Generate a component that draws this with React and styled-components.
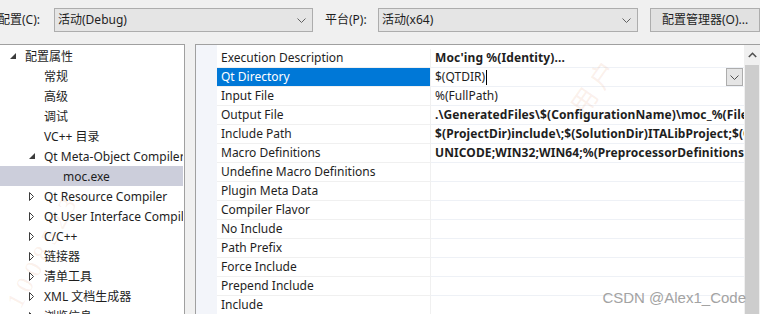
import React from 'react';
import styled, { createGlobalStyle } from 'styled-components';

const GlobalStyle = createGlobalStyle`
  html, body {
    margin: 0;
    padding: 0;
    background: #f0f0f0;
    overflow: hidden;
  }
  body {
    font-family: "Noto Sans", "Noto Sans CJK SC", sans-serif;
    font-size: 12px;
    color: #1e1e1e;
  }
`;

const Dialog = styled.div`
  position: relative;
  width: 760px;
  height: 314px;
  overflow: hidden;
  background: #f0f0f0;
  display: flex;
  flex-direction: column;
`;

const TopBar = styled.div`
  height: 44px;
  display: flex;
  align-items: flex-start;
  padding-top: 8px;
  box-sizing: border-box;
`;

const FieldLabel = styled.div`
  width: ${(p) => p.$width}px;
  height: 24px;
  line-height: 24px;
  padding-left: ${(p) => p.$pad || 0}px;
  margin-left: ${(p) => p.$shift || 0}px;
  box-sizing: border-box;
  white-space: nowrap;
  flex-shrink: 0;
`;

const Combo = styled.div`
  width: ${(p) => p.$width}px;
  height: 24px;
  box-sizing: border-box;
  border: 1px solid #adadad;
  background: #e5e5e5;
  display: flex;
  align-items: center;
  justify-content: space-between;
  padding: 0 6px 0 3px;
  flex-shrink: 0;
`;

const ComboText = styled.span`
  line-height: 22px;
`;

const Button = styled.div`
  margin-left: 12px;
  width: 110px;
  height: 24px;
  box-sizing: border-box;
  border: 1px solid #adadad;
  background: #e1e1e1;
  line-height: 22px;
  padding-left: 11px;
  white-space: nowrap;
  flex-shrink: 0;
`;

const Body = styled.div`
  flex: 1;
  display: flex;
  gap: 10px;
  min-height: 0;
`;

const TreePanel = styled.div`
  margin-left: -1px;
  width: 186px;
  box-sizing: border-box;
  border: 1px solid #a0a0a0;
  border-bottom: none;
  background: #ffffff;
  padding-top: 1px;
  overflow: hidden;
  flex-shrink: 0;
`;

const TreeRow = styled.div`
  height: 20px;
  display: flex;
  align-items: center;
  padding-left: ${(p) => 10 + p.$level * 19}px;
  background: ${(p) => (p.$selected ? '#cccedb' : 'transparent')};
  white-space: nowrap;
  margin-right: 1px;
  overflow: hidden;
`;

const Expander = styled.span`
  width: 15px;
  height: 20px;
  display: flex;
  align-items: center;
  flex-shrink: 0;
`;

const GridPanel = styled.div`
  width: 565px;
  box-sizing: border-box;
  border: 1px solid #a0a0a0;
  border-bottom: none;
  border-right: none;
  background: #ffffff;
  display: flex;
  overflow: hidden;
  flex-shrink: 0;
`;

const Gutter = styled.div`
  width: 21px;
  background: #f3f5fa;
  flex-shrink: 0;
`;

const Rows = styled.div`
  flex: 1;
  padding-top: 4px;
  min-width: 0;
`;

const PropRow = styled.div`
  height: 19px;
  display: grid;
  grid-template-columns: 214px 1fr;
`;

const NameCell = styled.div`
  box-sizing: border-box;
  padding-left: 4px;
  line-height: 18px;
  border-bottom: 1px solid #f0f0f0;
  border-right: 1px solid #f0f0f0;
  background: ${(p) => (p.$selected ? '#0078d7' : '#ffffff')};
  color: ${(p) => (p.$selected ? '#ffffff' : '#1e1e1e')};
  white-space: nowrap;
  overflow: hidden;
`;

const ValueCell = styled.div`
  box-sizing: border-box;
  padding-left: 4px;
  line-height: 18px;
  border-bottom: 1px solid #eef1f6;
  font-weight: ${(p) => (p.$bold ? 700 : 400)};
  white-space: nowrap;
  overflow: hidden;
  display: flex;
  align-items: center;
  justify-content: space-between;
  padding-right: 1px;
`;

const ValueText = styled.span`
  letter-spacing: ${(p) => (p.$bold ? '0.1px' : '0')};
`;

const Caret = styled.span`
  display: inline-block;
  width: 1px;
  height: 15px;
  background: #000;
  vertical-align: middle;
  margin-left: 1px;
`;

const DropButton = styled.div`
  width: 17px;
  height: 18px;
  box-sizing: border-box;
  border: 1px solid #adadad;
  background: #e5e5e5;
  display: flex;
  align-items: center;
  justify-content: center;
  flex-shrink: 0;
`;

const Scrollbar = styled.div`
  width: 16px;
  background: #f0f0f0;
  display: flex;
  flex-direction: column;
  flex-shrink: 0;
`;

const ScrollArrow = styled.div`
  height: 20px;
  display: flex;
  align-items: center;
  justify-content: center;
`;

const ScrollThumb = styled.div`
  flex: 1;
  margin: 0 1px;
  background: #cdcdcd;
`;

const Watermark = styled.div`
  position: absolute;
  left: ${(p) => p.$x}px;
  top: ${(p) => p.$y}px;
  transform: rotate(${(p) => p.$rot}deg);
  transform-origin: left top;
  font-family: "Liberation Serif", "Noto Sans CJK SC", serif;
  font-size: ${(p) => p.$size}px;
  letter-spacing: 6px;
  color: rgba(225, 150, 110, 0.14);
  white-space: nowrap;
  pointer-events: none;
`;

const Credit = styled.div`
  position: absolute;
  right: 14px;
  bottom: 8px;
  font-family: "Liberation Sans", Arial, sans-serif;
  font-size: 15px;
  color: #a3a3a3;
  white-space: nowrap;
`;

const Chevron = ({ color = '#606060' }) => (
  <svg width="9" height="5" viewBox="0 0 9 5">
    <path d="M0.5 0.5 L4.5 4.5 L8.5 0.5" fill="none" stroke={color} strokeWidth="1" />
  </svg>
);

const OpenArrow = () => (
  <svg width="6" height="6" viewBox="0 0 6 6">
    <path d="M6 0 L6 6 L0 6 Z" fill="#3c3c3c" />
  </svg>
);

const ClosedArrow = () => (
  <svg width="5" height="9" viewBox="0 0 5 9">
    <path d="M0.5 0.5 L4.5 4.5 L0.5 8.5 Z" fill="none" stroke="#3c3c3c" strokeWidth="1" />
  </svg>
);

const treeItems = [
  { label: '配置属性', level: 0, state: 'open' },
  { label: '常规', level: 1 },
  { label: '高级', level: 1 },
  { label: '调试', level: 1 },
  { label: 'VC++ 目录', level: 1 },
  { label: 'Qt Meta-Object Compiler', level: 1, state: 'open' },
  { label: 'moc.exe', level: 2, selected: true },
  { label: 'Qt Resource Compiler', level: 1, state: 'closed' },
  { label: 'Qt User Interface Compiler', level: 1, state: 'closed' },
  { label: 'C/C++', level: 1, state: 'closed' },
  { label: '链接器', level: 1, state: 'closed' },
  { label: '清单工具', level: 1, state: 'closed' },
  { label: 'XML 文档生成器', level: 1, state: 'closed' },
  { label: '浏览信息', level: 1, state: 'closed' },
];

const props = [
  { name: 'Execution Description', value: "Moc'ing %(Identity)...", bold: true },
  { name: 'Qt Directory', value: '$(QTDIR)', selected: true },
  { name: 'Input File', value: '%(FullPath)' },
  { name: 'Output File', value: '.\\GeneratedFiles\\$(ConfigurationName)\\moc_%(Filename).cpp', bold: true },
  { name: 'Include Path', value: '$(ProjectDir)include\\;$(SolutionDir)ITALibProject;$(QTDIR)\\include', bold: true },
  { name: 'Macro Definitions', value: 'UNICODE;WIN32;WIN64;%(PreprocessorDefinitions)', bold: true },
  { name: 'Undefine Macro Definitions', value: '' },
  { name: 'Plugin Meta Data', value: '' },
  { name: 'Compiler Flavor', value: '' },
  { name: 'No Include', value: '' },
  { name: 'Path Prefix', value: '' },
  { name: 'Force Include', value: '' },
  { name: 'Prepend Include', value: '' },
  { name: 'Include', value: '' },
];

export default function App() {
  return (
    <Dialog>
      <GlobalStyle />
      <TopBar>
        <FieldLabel $width={56} $shift={-2}>配置(C):</FieldLabel>
        <Combo $width={259}>
          <ComboText>活动(Debug)</ComboText>
          <Chevron />
        </Combo>
        <FieldLabel $width={65} $pad={12}>平台(P):</FieldLabel>
        <Combo $width={260}>
          <ComboText>活动(x64)</ComboText>
          <Chevron />
        </Combo>
        <Button>配置管理器(O)...</Button>
      </TopBar>
      <Body>
        <TreePanel>
          {treeItems.map((item) => (
            <TreeRow key={item.label} $level={item.level} $selected={item.selected}>
              <Expander>
                {item.state === 'open' && <OpenArrow />}
                {item.state === 'closed' && <ClosedArrow />}
              </Expander>
              {item.label}
            </TreeRow>
          ))}
        </TreePanel>
        <GridPanel>
          <Gutter />
          <Rows>
            {props.map((p) => (
              <PropRow key={p.name}>
                <NameCell $selected={p.selected}>{p.name}</NameCell>
                <ValueCell $bold={p.bold}>
                  <ValueText $bold={p.bold}>
                    {p.value}
                    {p.selected && <Caret />}
                  </ValueText>
                  {p.selected && (
                    <DropButton>
                      <Chevron color="#505050" />
                    </DropButton>
                  )}
                </ValueCell>
              </PropRow>
            ))}
          </Rows>
          <Scrollbar>
            <ScrollArrow>
              <svg width="9" height="6" viewBox="0 0 9 6">
                <path d="M0.8 5 L4.5 1.3 L8.2 5" fill="none" stroke="#505050" strokeWidth="1.6" />
              </svg>
            </ScrollArrow>
            <ScrollThumb />
          </Scrollbar>
        </GridPanel>
      </Body>
      <Watermark $x={560} $y={100} $rot={-55} $size={26}>用户</Watermark>
      <Watermark $x={2} $y={300} $rot={-62} $size={24}>1008523</Watermark>
      <Credit>CSDN @Alex1_Code</Credit>
    </Dialog>
  );
}
